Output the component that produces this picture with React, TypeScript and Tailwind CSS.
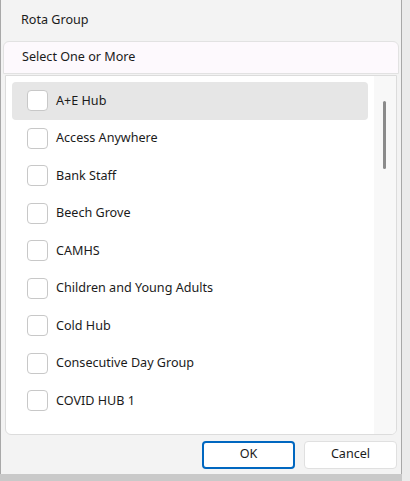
import { useState } from "react";

const GROUPS = [
  "A+E Hub",
  "Access Anywhere",
  "Bank Staff",
  "Beech Grove",
  "CAMHS",
  "Children and Young Adults",
  "Cold Hub",
  "Consecutive Day Group",
  "COVID HUB 1",
];

export default function App() {
  const [checked, setChecked] = useState<Record<string, boolean>>({});

  return (
    <div
      className="flex h-[481px] w-[410px] overflow-hidden bg-[#c9c9c9] text-[12.6px] text-[#1b1b1b]"
      style={{ fontFamily: '"Noto Sans", "Segoe UI", sans-serif' }}
    >
      <div className="flex h-[474px] w-[402px] flex-col border-r border-l border-[#a8a8a8] bg-[#f3f3f3]">
        {/* Title */}
        <div className="flex h-[41px] items-center pl-[20px]">Rota Group</div>

        {/* Select header */}
        <div className="mx-[2px] flex h-[33px] items-center rounded-t-[6px] border border-[#e2e2e2] bg-[#fdf9fd] pl-[18px]">
          Select One or More
        </div>

        {/* List */}
        <div className="mx-[4px] mt-[1px] flex h-[360px] overflow-hidden rounded-b-[6px] border border-[#dcdcdc] bg-white">
          <div className="flex-1 px-[6px] pt-[6px]">
            {GROUPS.map((g, i) => (
              <div
                key={g}
                onClick={() => setChecked((c) => ({ ...c, [g]: !c[g] }))}
                className={`flex h-[37.5px] cursor-default items-center rounded-[4px] pl-[15px] ${
                  i === 0 ? "bg-[#e6e6e6]" : ""
                }`}
              >
                <span
                  className={`h-[21px] w-[21px] rounded-[4px] border ${
                    checked[g] ? "border-[#0067c0] bg-[#0067c0]" : "border-[#c8c8c8] bg-white"
                  }`}
                />
                <span className="ml-[8px] pt-[1px]">{g}</span>
              </div>
            ))}
          </div>
          <div className="w-[22px] bg-[#f8f8f8] pt-[25px]">
            <div className="ml-[9px] h-[68px] w-[3px] rounded-full bg-[#8b8b8b]" />
          </div>
        </div>

        {/* Footer */}
        <div className="flex flex-1 items-center justify-end gap-[9px] pr-[4px]">
          <button
            type="button"
            className="h-[28px] w-[93px] rounded-[4px] border-2 border-[#0067c0] bg-white text-[12.6px]"
          >
            OK
          </button>
          <button
            type="button"
            className="h-[28px] w-[93px] rounded-[4px] border border-[#e0e0e0] bg-white text-[12.6px]"
          >
            Cancel
          </button>
        </div>
      </div>
      <div className="flex-1 bg-[#ebebeb]" />
    </div>
  );
}
